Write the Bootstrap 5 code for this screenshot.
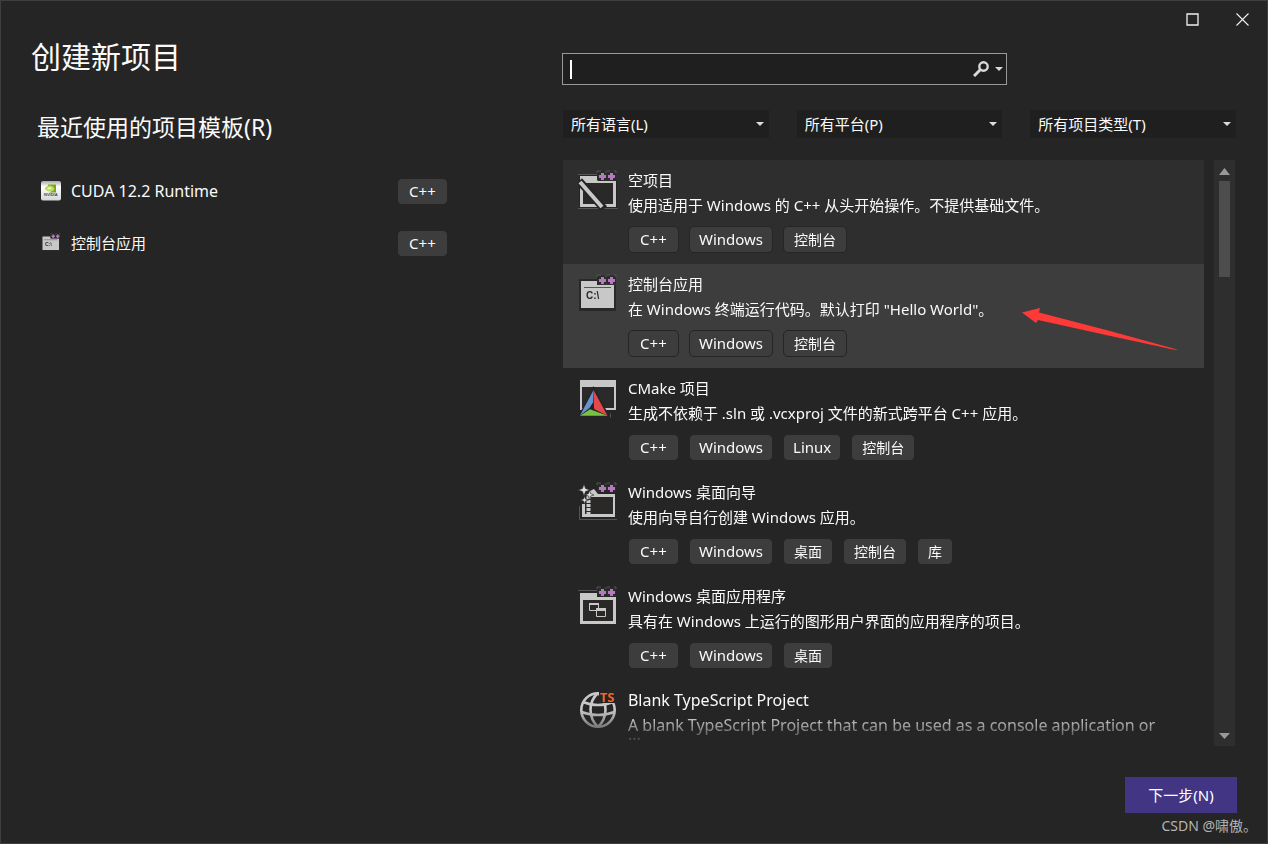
<!DOCTYPE html>
<html lang="zh-CN">
<head>
<meta charset="utf-8">
<meta name="viewport" content="width=device-width, initial-scale=1">
<title>创建新项目</title>
<link href="https://cdn.jsdelivr.net/npm/bootstrap@5.3.0/dist/css/bootstrap.min.css" rel="stylesheet">
<style>
  :root { --win: #252525; --field: #1f1f1f; --chip: #3d3d3d; --ui: "Noto Sans", "Noto Sans CJK SC", sans-serif; }
  body { background: var(--win); color: #fafafa; font-family: var(--ui); font-size: 15px; line-height: 25px; }
  .app-window { height: 100vh; min-height: 480px; border: 1px solid #3f3f3f; }
  .title-bar { height: 36px; }
  .win-btn { width: 50px; background: none; border: 0; padding: 0; color: #f0f0f0; }
  .app-main { display: grid; grid-template-columns: 21fr 34fr; column-gap: 114px; padding: 2px 30px 0; min-height: 0; }
  .create-pane { min-height: 0; }
  .page-title { font-size: 30px; line-height: 40px; margin: 0; font-weight: 400; }
  .recent-title { font-size: 23px; line-height: 32px; margin: 34px 0 22px 6px; font-weight: 400; }
  .recent-row { height: 52px; padding-left: 10px; gap: 10px; color: inherit; text-decoration: none; }
  .latin { font-size: 16px; }
  .chip { background: var(--chip); border: 1px solid var(--win); border-radius: 5px; font-size: 15px; line-height: 25px; padding: 0 9px; min-width: 51px; text-align: center; white-space: nowrap; }
  .chip-zh { font-size: 14px; padding: 0 10px; min-width: 0; }
  .search-box { width: 66%; height: 32px; margin-top: 16px; background: var(--field); border: 1px solid #999; padding: 0 2px 0 7px; }
  .search-box input { background: none; border: 0; outline: 0; color: inherit; padding: 0 4px; min-width: 0; }
  .text-caret { width: 2px; height: 19px; background: #fff; }
  .icon-btn { background: none; border: 0; padding: 0; color: #d8d8d8; display: flex; }
  .search-box .icon-btn:last-child { margin-left: 6px; }
  .filters { display: grid; grid-template-columns: repeat(3, 1fr); gap: 28px; margin: 25px 1px 22px; }
  .filter-select { height: 28px; width: 100%; appearance: none; border: 0; border-radius: 0; color: #fafafa; font-size: 15px; line-height: 28px; padding: 0 24px 0 8px;
    background: var(--field) url("data:image/svg+xml,%3Csvg xmlns='http://www.w3.org/2000/svg' viewBox='0 0 8 4'%3E%3Cpath d='M0 0h8L4 4z' fill='%23ddd'/%3E%3C/svg%3E") no-repeat right 5px center / 8px 4px; }
  .list-area { min-height: 0; margin: 0 2px 0 1px; gap: 10px; }
  .template-list { min-height: 0; overflow: hidden; -webkit-mask-image: linear-gradient(#000 calc(100% - 36px), transparent); mask-image: linear-gradient(#000 calc(100% - 36px), transparent); }
  .template { height: 104px; padding: 8px 16px 0 15px; gap: 10px; flex-shrink: 0; color: inherit; text-decoration: none; }
  .template.focused { background: #2e2e2e; }
  .template.hovered { background: #3d3d3d; }
  .template .pic { width: 40px; height: 40px; margin-top: 2px; flex-shrink: 0; }
  .chips { gap: 10px; margin-top: 8px; }
  .more { line-height: 8px; margin-top: -8px; }
  .arrow-note { right: 24px; top: 43px; width: 158px; height: 44px; }
  .scroll-track { width: 21px; background: #2e2e2e; padding: 8px 0 7px; }
  .scroll-thumb { width: 11px; height: 96px; background: #4d4d4d; margin-top: 6px; }
  .app-footer { padding: 31px 30px 30px; }
  .next-btn { width: 112px; height: 36px; background: #413584; border: 0; color: #fff; }
  .watermark { right: 10px; bottom: 10px; font-size: 14px; color: #b4b4b4; }
</style>
</head>
<body>
<svg width="0" height="0" class="position-absolute" aria-hidden="true">
  <defs>
    <g id="plus-plus">
      <path d="M19 1.500h9v2h1v-2h9v9h-9v-2h-1v2h-9z" fill="#2b2b2b"/>
      <path d="M19 3V1h4M28 1v2M32 1h-3M38 3V1h-2" fill="none" stroke="#555"/>
      <path d="M23 3h3v2h2v3h-2v2h-3v-2h-2V5h2zM32 3h3v2h2v3h-2v2h-3v-2h-2V5h2z" fill="#b877c2"/>
    </g>
    <g id="console-app">
      <path d="M1 5h19v6h18v26H1z" fill="#292929"/>
      <path d="M3 7h16v4h17v23H3z" fill="#c8c8c8"/>
      <path d="M6 13.500h27" stroke="#555"/>
      <text x="8" y="25" font-family="Liberation Sans" font-weight="700" font-size="10" fill="#2a2a2a">C:\</text>
      <use href="#plus-plus"/>
    </g>
  </defs>
</svg>

<div class="app-window d-flex flex-column position-relative">
  <header class="title-bar d-flex justify-content-end">
    <button class="win-btn" type="button" aria-label="最大化"><svg width="13" height="13"><path d="M1 1h11v11H1z" fill="none" stroke="currentColor" stroke-width="1.300"/></svg></button>
    <button class="win-btn" type="button" aria-label="关闭"><svg width="13" height="13"><path d="M.5.5l12 12m0-12l-12 12" stroke="currentColor" stroke-width="1.100"/></svg></button>
  </header>

  <main class="app-main flex-grow-1">
    <section>
      <h1 class="page-title">创建新项目</h1>
      <h2 class="recent-title">最近使用的项目模板(R)</h2>
      <a href="#" class="recent-row d-flex align-items-center">
        <svg width="20" height="20" viewBox="0 0 20 20" class="flex-shrink-0">
          <defs><linearGradient id="tile" x2="0" y2="1"><stop stop-color="#aaa"/><stop offset=".3" stop-color="#fff"/><stop offset="1" stop-color="#d5d5d5"/></linearGradient></defs>
          <rect width="20" height="19.500" rx="2" fill="url(#tile)"/>
          <path d="M7 3.500h8v8H8l5-2.500c-1-4-4-4-6-3z" fill="#7ba51c"/>
          <path d="M3.500 7.500c3-4.500 8-3.500 10 0-3 4-7 4-10 0z" fill="#b4dc52"/><path d="M6 7.500c2-2 4-2 5 0-2 1.500-4 1.500-5 0z" fill="#e6f5b5"/>
          <text x="3" y="15" font-family="Liberation Sans" font-weight="700" font-size="4" fill="#444">NVIDIA</text>
        </svg>
        <span class="latin flex-grow-1">CUDA 12.2 Runtime</span><span class="chip">C++</span>
      </a>
      <a href="#" class="recent-row d-flex align-items-center">
        <svg width="20" height="20" viewBox="0 0 40 40" class="flex-shrink-0"><use href="#console-app"/></svg>
        <span class="flex-grow-1">控制台应用</span><span class="chip">C++</span>
      </a>
    </section>

    <section class="create-pane d-flex flex-column">
      <div class="search-box d-flex align-items-center flex-shrink-0">
        <span class="text-caret"></span>
        <input type="text" class="flex-grow-1" aria-label="搜索模板">
        <button class="icon-btn" type="button" aria-label="搜索"><svg width="16" height="16" viewBox="0 0 16 16"><circle cx="10.500" cy="5.500" r="4.200" fill="none" stroke="currentColor" stroke-width="2.400"/><path d="M7.500 8.500L1 15" stroke="currentColor" stroke-width="3"/></svg></button>
        <button class="icon-btn" type="button" aria-label="搜索选项"><svg width="9" height="4"><path d="M0 0h8L4 4z" fill="currentColor"/></svg></button>
      </div>
      <div class="filters flex-shrink-0">
        <select class="filter-select" aria-label="语言"><option>所有语言(L)</option></select>
        <select class="filter-select" aria-label="平台"><option>所有平台(P)</option></select>
        <select class="filter-select" aria-label="项目类型"><option>所有项目类型(T)</option></select>
      </div>

      <div class="list-area d-flex flex-grow-1">
        <div class="template-list d-flex flex-column flex-grow-1">
          <a href="#" class="template focused d-flex">
            <svg class="pic" viewBox="0 0 40 40">
              <path d="M0 4.500h20M0 38.500h40" stroke="#555"/>
              <path d="M1 5h19v6h19v27H1z" fill="#252525"/>
              <path d="M2 6h18v5h18v26H2z" fill="#c8c8c8"/><path d="M5 13h30v21H5z" fill="#2a2927"/>
              <path d="M1 11l25 28" stroke="#252525" stroke-width="8"/><path d="M2 12l22 25" stroke="#c8c8c8" stroke-width="4"/>
              <path d="M2 18l3 3v13h11l3 3H2z" fill="#c8c8c8"/>
              <use href="#plus-plus"/>
            </svg>
            <div><div>空项目</div><div>使用适用于 Windows 的 C++ 从头开始操作。不提供基础文件。</div>
              <div class="chips d-flex"><span class="chip">C++</span><span class="chip">Windows</span><span class="chip chip-zh">控制台</span></div></div>
          </a>
          <a href="#" class="template hovered d-flex position-relative">
            <svg class="pic" viewBox="0 0 40 40"><use href="#console-app"/></svg>
            <div><div>控制台应用</div><div>在 Windows 终端运行代码。默认打印 "Hello World"。</div>
              <div class="chips d-flex"><span class="chip">C++</span><span class="chip">Windows</span><span class="chip chip-zh">控制台</span></div></div>
            <svg class="arrow-note position-absolute" viewBox="0 0 158 44"><path d="M0 5.500L18 1l-1 4.500L88 24l68 18.800q-5 0-14-2.300L84 28 16 13l-2 3z" fill="#fd3a38"/></svg>
          </a>
          <a href="#" class="template d-flex">
            <svg class="pic" viewBox="0 0 40 40">
              <path d="M2 2h36v30H2z" fill="#c8c8c8"/><path d="M4 9h32v21H4z" fill="#2a2a2a"/>
              <path d="M15.500 8L0 39h32z" fill="#252525"/>
              <path d="M15.500 12L2 37.500l10-8 3-5z" fill="#6594d0"/><path d="M15.500 12l14 25.700L16 31z" fill="#e4484b"/><path d="M2 37.700l10-6.500 17.500 6.500z" fill="#79c143"/>
              <path d="M15 25l-3.500 5 5 2z" fill="#222"/><path d="M32.500 35.500v4" stroke="#555"/>
            </svg>
            <div><div>CMake 项目</div><div>生成不依赖于 .sln 或 .vcxproj 文件的新式跨平台 C++ 应用。</div>
              <div class="chips d-flex"><span class="chip">C++</span><span class="chip">Windows</span><span class="chip">Linux</span><span class="chip chip-zh">控制台</span></div></div>
          </a>
          <a href="#" class="template d-flex">
            <svg class="pic" viewBox="0 0 40 40">
              <path d="M1.500 24v13.500H39" fill="none" stroke="#555"/>
              <path d="M12 9l4-2 4 5h17v23H4V22h3l5-8z" fill="#c8c8c8"/><path d="M7 15h28v17H7z" fill="#2a2927"/>
              <path d="M10.500 14v18" stroke="#c8c8c8" stroke-width="4" stroke-dasharray="3 1"/>
              <path d="M6 2l1.500 4.500L12 8l-4.500 1.500L6 14 4.500 9.500 0 8l4.500-1.500zM11.500 8l1 3.500L16 13l-3.500 1-1 4-1-4L7 13l3.500-1.500zM6.500 14l1 3 3 1-3 1-1 3-1-3-3-1 3-1z" fill="#e0e0e0" stroke="#252525" stroke-width=".6"/>
              <use href="#plus-plus"/>
            </svg>
            <div><div>Windows 桌面向导</div><div>使用向导自行创建 Windows 应用。</div>
              <div class="chips d-flex"><span class="chip">C++</span><span class="chip">Windows</span><span class="chip chip-zh">桌面</span><span class="chip chip-zh">控制台</span><span class="chip chip-zh">库</span></div></div>
          </a>
          <a href="#" class="template d-flex">
            <svg class="pic" viewBox="0 0 40 40">
              <path d="M0 4.500h20" stroke="#555"/>
              <path d="M2 7h17v4h19v27H2z" fill="#c8c8c8"/><path d="M5 14h30v21H5z" fill="#2a2927"/>
              <path d="M11.500 17.500h9v7h-9z" fill="none" stroke="#c8c8c8"/><path d="M11 17h10v2H11z" fill="#c8c8c8"/>
              <path d="M18.500 22.500h9v8h-9z" fill="#2a2927" stroke="#c8c8c8"/><path d="M18 22h10v3H18z" fill="#c8c8c8"/>
              <use href="#plus-plus"/>
            </svg>
            <div><div>Windows 桌面应用程序</div><div>具有在 Windows 上运行的图形用户界面的应用程序的项目。</div>
              <div class="chips d-flex"><span class="chip">C++</span><span class="chip">Windows</span><span class="chip chip-zh">桌面</span></div></div>
          </a>
          <a href="#" class="template d-flex">
            <svg class="pic" viewBox="0 0 40 40">
              <g fill="none" stroke="#c8c8c8" stroke-width="2.600"><circle cx="20" cy="20" r="16.700"/><path d="M20 3c-10 9-10 24 0 34M20 3c10 9 10 24 0 34M5 12c9 4 21 4 30 0M3.500 22c10 4 23 4 33 0"/></g>
              <path d="M21 1h19v12H21z" fill="#252525"/>
              <text x="22" y="12" font-family="Noto Sans" font-weight="700" font-size="13" fill="#f4662b">TS</text>
            </svg>
            <div class="latin"><div>Blank TypeScript Project</div><div>A blank TypeScript Project that can be used as a console application or</div><div class="more">...</div></div>
          </a>
        </div>
        <div class="scroll-track d-flex flex-column align-items-center flex-shrink-0">
          <svg width="11" height="7"><path d="M0 7h11L5.500 0z" fill="#999"/></svg>
          <div class="scroll-thumb"></div>
          <svg width="11" height="6" class="mt-auto"><path d="M0 0h11L5.500 6z" fill="#999"/></svg>
        </div>
      </div>
    </section>
  </main>

  <footer class="app-footer d-flex justify-content-end">
    <button class="next-btn" type="button">下一步(N)</button>
  </footer>
  <div class="watermark position-absolute lh-1">CSDN @啸傲。</div>
</div>
<script src="https://cdn.jsdelivr.net/npm/bootstrap@5.3.0/dist/js/bootstrap.bundle.min.js"></script>
</body>
</html>
